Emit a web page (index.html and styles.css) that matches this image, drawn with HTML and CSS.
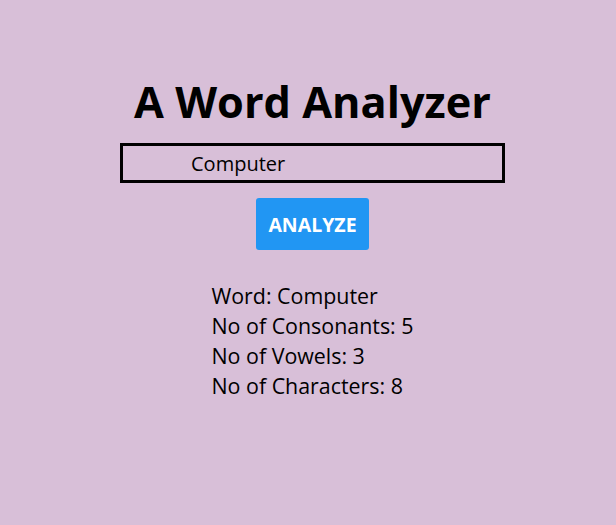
FILE: index.html
```html
<!DOCTYPE html>
<html>
<head>
<meta charset="utf-8">
<link rel="stylesheet" href="styles.css">
</head>
<body>
<main class="app">
  <h1 class="title">A Word Analyzer</h1>
  <input class="word-input" type="text" value="Computer">
  <button class="analyze-btn">ANALYZE</button>
  <div class="results">
    <p class="line">Word: Computer</p>
    <p class="line">No of Consonants: 5</p>
    <p class="line">No of Vowels: 3</p>
    <p class="line">No of Characters: 8</p>
  </div>
</main>
</body>
</html>
```
FILE: styles.css
```css
html, body {
  margin: 0;
  padding: 0;
  background: #d8bfd8;
  height: 100%;
}
body {
  font-family: "Open Sans", "Noto Sans", sans-serif;
  color: #000;
}
.app {
  display: flex;
  flex-direction: column;
  align-items: center;
  padding: 73px 0 0 9px;
}
.title {
  margin: 0;
  font-size: 43.3px;
  font-weight: 700;
  line-height: 57px;
}
.word-input {
  box-sizing: border-box;
  margin-top: 13px;
  width: 385px;
  height: 40px;
  border: 3px solid #000;
  background: transparent;
  padding: 0 0 0 68px;
  font-family: "Open Sans", "Noto Sans", sans-serif;
  font-size: 20px;
  color: #000;
  outline: none;
}
.analyze-btn {
  margin-top: 15px;
  width: 113px;
  height: 52px;
  border: none;
  border-radius: 3px;
  background: #2196f3;
  color: #fff;
  font-family: "Open Sans", "Noto Sans", sans-serif;
  font-size: 19.5px;
  font-weight: 700;
  padding: 0;
}
.results {
  margin-top: 31px;
  text-align: left;
}
.line {
  margin: 0;
  font-size: 21.4px;
  line-height: 30px;
}
```
